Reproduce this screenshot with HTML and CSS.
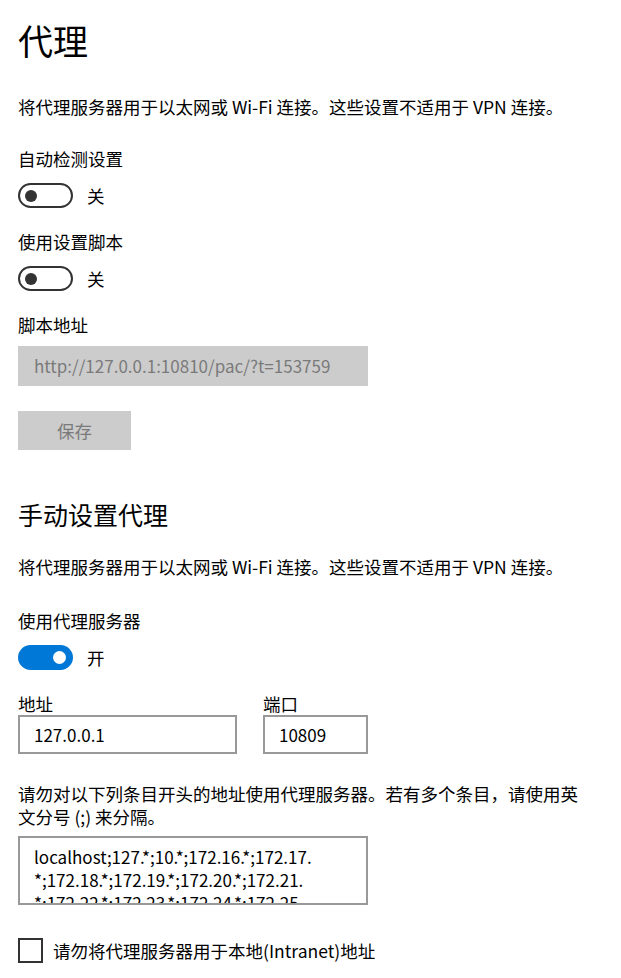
FILE: index.html
```html
<!DOCTYPE html>
<html lang="zh-CN">
<head>
<meta charset="utf-8">
<title>代理</title>
<link rel="stylesheet" href="styles.css">
</head>
<body>
<main class="page">
  <h1 class="title">代理</h1>
  <p class="desc desc-first">将代理服务器用于以太网或 Wi-Fi 连接。这些设置不适用于 VPN 连接。</p>

  <div class="label label-a">自动检测设置</div>
  <div class="toggle-row">
    <span class="toggle off"><span class="knob"></span></span>
    <span class="toggle-text">关</span>
  </div>

  <div class="label label-b">使用设置脚本</div>
  <div class="toggle-row">
    <span class="toggle off"><span class="knob"></span></span>
    <span class="toggle-text">关</span>
  </div>

  <div class="label label-b">脚本地址</div>
  <div class="field-disabled">http://127.0.0.1:10810/pac/?t=153759</div>
  <div class="btn-disabled">保存</div>

  <h2 class="heading">手动设置代理</h2>
  <p class="desc desc-second">将代理服务器用于以太网或 Wi-Fi 连接。这些设置不适用于 VPN 连接。</p>

  <div class="label label-c">使用代理服务器</div>
  <div class="toggle-row">
    <span class="toggle on"><span class="knob"></span></span>
    <span class="toggle-text">开</span>
  </div>

  <div class="addr-row">
    <div class="addr-col">
      <div class="field-label">地址</div>
      <div class="field field-addr">127.0.0.1</div>
    </div>
    <div class="port-col">
      <div class="field-label">端口</div>
      <div class="field field-port">10809</div>
    </div>
  </div>

  <p class="para">请勿对以下列条目开头的地址使用代理服务器。若有多个条目，请使用英<br>文分号 (;) 来分隔。</p>
  <div class="area"><div class="area-inner">localhost;127.*;10.*;172.16.*;172.17.<br>*;172.18.*;172.19.*;172.20.*;172.21.<br>*;172.22.*;172.23.*;172.24.*;172.25.</div></div>

  <div class="check-row">
    <span class="checkbox"></span>
    <span class="check-text">请勿将代理服务器用于本地(Intranet)地址</span>
  </div>
</main>
</body>
</html>
```

FILE: styles.css
```css
html, body {
  margin: 0;
  padding: 0;
  background: #ffffff;
}

body {
  font-family: "Noto Sans CJK SC", "Noto Sans", sans-serif;
  color: #000000;
  font-size: 17.5px;
}

.page {
  padding: 16px 0 0 18px;
  width: 603px;
  box-sizing: border-box;
}

.title {
  margin: 0;
  font-size: 35px;
  font-weight: 400;
  line-height: 48px;
  height: 48px;
}

.desc {
  margin: 0;
  line-height: 24px;
  white-space: nowrap;
}

.desc-first {
  margin-top: 31px;
}

.label {
  line-height: 24px;
}

.label-a {
  margin-top: 28px;
}

.label-b {
  margin-top: 22px;
}

.label-c {
  margin-top: 30px;
}

.toggle-row {
  display: flex;
  align-items: center;
  height: 25px;
  margin-top: 12px;
}

.toggle {
  display: flex;
  align-items: center;
  width: 55px;
  height: 25px;
  box-sizing: border-box;
  border-radius: 13px;
  padding: 0 5px;
}

.toggle.off {
  border: 2px solid #333333;
  justify-content: flex-start;
}

.toggle.on {
  background: #0078d7;
  border: 2px solid #0078d7;
  justify-content: flex-end;
}

.knob {
  width: 12px;
  height: 12px;
  border-radius: 50%;
  background: #333333;
}

.toggle.on .knob {
  background: #ffffff;
  width: 13px;
  height: 13px;
}

.toggle-text {
  margin-left: 14px;
  line-height: 25px;
}

.field-disabled {
  margin-top: 9px;
  width: 350px;
  height: 40px;
  box-sizing: border-box;
  background: #cccccc;
  color: #7a7a7a;
  padding: 0 16px;
  line-height: 40px;
  font-size: 17px;
  white-space: nowrap;
  overflow: hidden;
}

.btn-disabled {
  margin-top: 25px;
  width: 113px;
  height: 39px;
  background: #cccccc;
  color: #7a7a7a;
  display: flex;
  align-items: center;
  justify-content: center;
}

.heading {
  margin: 47px 0 0;
  font-size: 25px;
  font-weight: 400;
  line-height: 34px;
}

.desc-second {
  margin-top: 24px;
}

.addr-row {
  display: flex;
  gap: 26px;
  margin-top: 23px;
}

.field-label {
  line-height: 22px;
}

.field {
  height: 39px;
  box-sizing: border-box;
  border: 2px solid #999999;
  line-height: 35px;
  padding: 0 14px;
  font-size: 17px;
}

.field-addr {
  width: 219px;
}

.field-port {
  width: 105px;
}

.para {
  margin: 28px 0 0;
  line-height: 23px;
  white-space: nowrap;
}

.area {
  margin-top: 8px;
  width: 350px;
  height: 69px;
  box-sizing: border-box;
  border: 2px solid #999999;
  overflow: hidden;
}

.area-inner {
  padding: 7px 14px 0;
  line-height: 23px;
  font-size: 17px;
  white-space: nowrap;
  height: 59px;
  overflow: hidden;
}

.check-row {
  display: flex;
  align-items: center;
  margin-top: 33px;
  height: 25px;
}

.checkbox {
  width: 25px;
  height: 25px;
  box-sizing: border-box;
  border: 2px solid #333333;
}

.check-text {
  margin-left: 10px;
  line-height: 25px;
}
```
